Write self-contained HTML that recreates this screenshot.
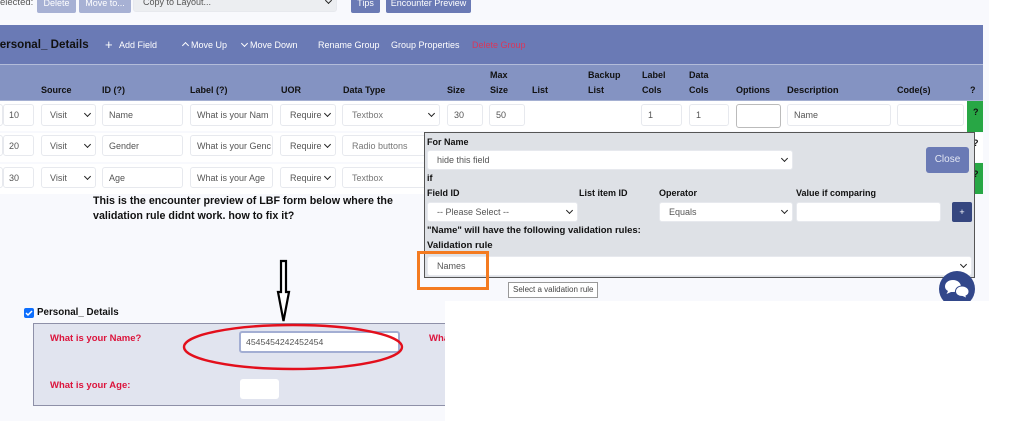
<!DOCTYPE html>
<html><head><meta charset="utf-8">
<style>
html,body{margin:0;padding:0;background:#fff;}
#p{position:relative;width:1024px;height:428px;overflow:hidden;background:#fff;font-family:"Liberation Sans",sans-serif;font-size:9px;color:#444;}
#p div{position:absolute;box-sizing:border-box;white-space:nowrap;}
.i{background:#fff;border:1px solid #e7e9ee;border-radius:3px;line-height:19px;padding-left:6px;color:#555;overflow:hidden;}
.s::after{content:"";position:absolute;right:5px;top:50%;width:4px;height:4px;margin-top:-4px;border-right:1.3px solid #222;border-bottom:1.3px solid #222;transform:rotate(45deg);}
.h{font-weight:bold;color:#111;line-height:14px;}
.w{color:#fff;line-height:12px;}
.b{color:#fff;border-radius:2px;text-align:center;}
.d{font-weight:bold;color:#111;line-height:12px;}
.r{background:#fff;}
</style></head><body><div id="p">
<div style="left:0;top:0;width:989px;height:421px;background:#f8f9fd"></div>

<div style="left:0;top:-3px;line-height:12px;color:#555;font-size:9.5px">elected:</div>
<div class="b" style="left:37px;top:-6px;width:39px;height:19px;background:#a7b1d4;line-height:19px">Delete</div>
<div class="b" style="left:79px;top:-6px;width:52px;height:19px;background:#a7b1d4;line-height:19px">Move to...</div>
<div class="i s" style="left:133px;top:-8px;width:204px;height:20px;background:#eceef1;padding-left:9px">Copy to Layout...</div>
<div class="b" style="left:351px;top:-6px;width:29px;height:19px;background:#6a7ab5;line-height:19px">Tips</div>
<div class="b" style="left:386px;top:-6px;width:85px;height:19px;background:#6a7ab5;line-height:19px">Encounter Preview</div>

<div style="left:0;top:25px;width:983px;height:39px;background:#6a7ab5"></div>
<div style="left:0;top:64px;width:983px;height:1px;background:#b3bcd9"></div>
<div style="left:0;top:65px;width:983px;height:35px;background:#8493c2"></div>
<div style="left:0;top:100px;width:983px;height:1px;background:#a5b0d2"></div>
<div class="r" style="left:0;top:101px;width:983px;height:30px"></div>
<div class="r" style="left:0;top:133px;width:983px;height:29px"></div>
<div class="r" style="left:0;top:164px;width:983px;height:30px"></div>

<div style="left:-8px;top:37px;font-weight:bold;font-size:11.6px;line-height:15px;color:#111">Personal_ Details</div>
<div class="w" style="left:105px;top:39px;font-size:13px">+</div>
<div class="w" style="left:119px;top:39px">Add Field</div>
<div style="left:183px;top:43px;width:5px;height:5px;border-left:1.2px solid #fff;border-top:1.2px solid #fff;transform:rotate(45deg)"></div>
<div class="w" style="left:191px;top:39px">Move Up</div>
<div style="left:242px;top:41px;width:5px;height:5px;border-right:1.2px solid #fff;border-bottom:1.2px solid #fff;transform:rotate(45deg)"></div>
<div class="w" style="left:250px;top:39px">Move Down</div>
<div class="w" style="left:318px;top:39px">Rename Group</div>
<div class="w" style="left:391px;top:39px">Group Properties</div>
<div class="w" style="left:472px;top:39px;color:#d8375c">Delete Group</div>

<div class="h" style="left:41px;top:83px">Source</div>
<div class="h" style="left:102px;top:83px">ID (?)</div>
<div class="h" style="left:190px;top:83px">Label (?)</div>
<div class="h" style="left:281px;top:83px">UOR</div>
<div class="h" style="left:343px;top:83px">Data Type</div>
<div class="h" style="left:447px;top:83px">Size</div>
<div class="h" style="left:490px;top:68px">Max</div>
<div class="h" style="left:490px;top:83px">Size</div>
<div class="h" style="left:532px;top:83px">List</div>
<div class="h" style="left:588px;top:68px">Backup</div>
<div class="h" style="left:588px;top:83px">List</div>
<div class="h" style="left:642px;top:68px">Label</div>
<div class="h" style="left:642px;top:83px">Cols</div>
<div class="h" style="left:689px;top:68px">Data</div>
<div class="h" style="left:689px;top:83px">Cols</div>
<div class="h" style="left:736px;top:83px">Options</div>
<div class="h" style="left:787px;top:83px;font-size:9.4px">Description</div>
<div class="h" style="left:897px;top:83px">Code(s)</div>
<div class="h" style="left:970px;top:83px">?</div>

<div class="i" style="left:-10px;top:104px;width:13px;height:22px"></div>
<div class="i" style="left:3px;top:104px;width:31px;height:22px;line-height:20px;padding-left:5px">10</div>
<div class="i s" style="left:41px;top:104px;width:55px;height:22px;line-height:20px;padding-left:8px">Visit</div>
<div class="i" style="left:102px;top:104px;width:81px;height:22px;line-height:20px">Name</div>
<div class="i" style="left:190px;top:104px;width:83px;height:22px;line-height:20px">What is your Nam</div>
<div class="i s" style="left:280px;top:104px;width:56px;height:22px;line-height:20px;padding:0 12px 0 9px">Require</div>
<div class="i s" style="left:342px;top:104px;width:98px;height:22px;line-height:20px;padding-left:9px;color:#777">Textbox</div>
<div class="i" style="left:447px;top:104px;width:36px;height:22px;line-height:20px">30</div>
<div class="i" style="left:489px;top:104px;width:36px;height:22px;line-height:20px">50</div>
<div class="i" style="left:641px;top:104px;width:41px;height:22px;line-height:20px">1</div>
<div class="i" style="left:689px;top:104px;width:40px;height:22px;line-height:20px">1</div>
<div class="i" style="left:736px;top:104px;width:45px;height:24px;border:1px solid #bbb"></div>
<div class="i" style="left:787px;top:104px;width:104px;height:22px;line-height:20px">Name</div>
<div class="i" style="left:897px;top:104px;width:67px;height:22px"></div>
<div style="left:967px;top:101px;width:16px;height:31px;background:#28a745"></div>
<div class="h" style="left:973px;top:105px;font-size:9px">?</div>

<div class="i" style="left:-10px;top:135px;width:13px;height:21px"></div>
<div class="i" style="left:3px;top:135px;width:31px;height:21px;line-height:21px;padding-left:5px">20</div>
<div class="i s" style="left:41px;top:135px;width:55px;height:21px;line-height:21px;padding-left:8px">Visit</div>
<div class="i" style="left:102px;top:135px;width:81px;height:21px;line-height:21px">Gender</div>
<div class="i" style="left:190px;top:135px;width:83px;height:21px;line-height:21px">What is your Genc</div>
<div class="i s" style="left:280px;top:135px;width:56px;height:21px;line-height:21px;padding:0 12px 0 9px">Require</div>
<div class="i" style="left:342px;top:135px;width:90px;height:21px;line-height:21px;padding-left:9px;color:#777">Radio buttons</div>
<div class="h" style="left:973px;top:136px;font-size:9px">?</div>

<div class="i" style="left:-10px;top:167px;width:13px;height:21px"></div>
<div class="i" style="left:3px;top:167px;width:31px;height:21px;line-height:20px;padding-left:5px">30</div>
<div class="i s" style="left:41px;top:167px;width:55px;height:21px;line-height:20px;padding-left:8px">Visit</div>
<div class="i" style="left:102px;top:167px;width:81px;height:21px;line-height:20px">Age</div>
<div class="i" style="left:190px;top:167px;width:83px;height:21px;line-height:20px">What is your Age</div>
<div class="i s" style="left:280px;top:167px;width:56px;height:21px;line-height:20px;padding:0 12px 0 9px">Require</div>
<div class="i" style="left:342px;top:167px;width:90px;height:21px;line-height:20px;padding-left:9px;color:#777">Textbox</div>
<div style="left:967px;top:163px;width:16px;height:31px;background:#28a745"></div>
<div class="h" style="left:973px;top:167px;font-size:9px">?</div>

<div style="left:93px;top:194px;font-weight:bold;font-size:10.7px;line-height:15px;color:#111;white-space:pre">This is the encounter preview of LBF form below where the
validation rule didnt work. how to fix it?</div>

<div style="left:424px;top:132px;width:551px;height:146px;background:#dee1e6;border:1px solid #555;border-bottom-width:1px"></div>
<div class="d" style="left:427px;top:136px">For Name</div>
<div class="i s" style="left:427px;top:150px;width:366px;height:20px;padding-left:9px">hide this field</div>
<div class="b" style="left:926px;top:147px;width:43px;height:26px;background:#6a7ab5;line-height:26px;font-size:10px;border-radius:3px;color:#e4e8f4">Close</div>
<div class="d" style="left:427px;top:172px">if</div>
<div class="d" style="left:427px;top:187px">Field ID</div>
<div class="d" style="left:579px;top:187px">List item ID</div>
<div class="d" style="left:659px;top:187px">Operator</div>
<div class="d" style="left:796px;top:187px">Value if comparing</div>
<div class="i s" style="left:427px;top:202px;width:151px;height:20px;padding-left:9px">-- Please Select --</div>
<div class="i s" style="left:659px;top:202px;width:134px;height:20px;padding-left:9px">Equals</div>
<div class="i" style="left:796px;top:202px;width:145px;height:20px"></div>
<div class="b" style="left:952px;top:202px;width:20px;height:20px;background:#35467f;line-height:20px">+</div>
<div class="d" style="left:427px;top:225px;font-size:9.5px">"Name" will have the following validation rules:</div>
<div class="d" style="left:427px;top:240px;font-size:9.6px">Validation rule</div>
<div class="i s" style="left:427px;top:256px;width:545px;height:20px;padding-left:9px">Names</div>
<div style="left:417px;top:251px;width:72px;height:39px;border:3px solid #f47b20"></div>
<div style="left:508px;top:282px;width:90px;height:16px;background:#fff;border:1px solid #999;line-height:14px;padding-left:4px;font-size:8px;color:#444">Select a validation rule</div>

<div style="left:939px;top:271px;width:37px;height:30px;overflow:hidden">
<svg width="37" height="30" viewBox="0 0 37 30" style="display:block"><circle cx="18" cy="18" r="18" fill="#32478a"/>
<path d="M14 9c-5 0-8 3-8 6.500 0 2 1 3.500 3 4.500l-1.500 3 4.500-2h2c5 0 8-2.500 8-5.500s-3-6.500-8-6.500z" fill="#fff"/>
<path d="M23 15c4 0 7 2.500 7 5.500 0 2-1 3.500-3 4.500l1 2.500-4.500-2c-4 0-7-2-7-5s2.500-5.500 6.500-5.500z" fill="#fff" stroke="#32478a" stroke-width="1"/></svg></div>

<div style="left:445px;top:301px;width:579px;height:127px;background:#fff"></div>

<div style="left:24px;top:308px;width:10px;height:10px;background:#0d6efd;border-radius:2px"></div>
<svg style="position:absolute;left:24px;top:308px" width="10" height="10" viewBox="0 0 10 10"><path d="M2 5l2 2 4-4" fill="none" stroke="#fff" stroke-width="1.5"/></svg>
<div style="left:37px;top:307px;font-weight:bold;font-size:9.8px;line-height:12px;color:#111">Personal_ Details</div>

<div style="left:33px;top:323px;width:412px;height:83px;background:#e1e4ef;border:1px solid #8e90a8;border-right:0"></div>
<div style="left:50px;top:333px;font-weight:bold;font-size:9.5px;line-height:12px;color:#dc143c">What is your Name?</div>
<div style="left:429px;top:333px;width:16px;overflow:hidden;font-weight:bold;font-size:9.5px;line-height:12px;color:#dc143c">What</div>
<div style="left:50px;top:380px;font-weight:bold;font-size:9.5px;line-height:12px;color:#dc143c">What is your Age:</div>
<div class="i" style="left:239px;top:331px;width:161px;height:22px;border:2px solid #a3aed3;line-height:18px;padding-left:5px;color:#555;font-size:8.7px">4545454242452454</div>
<div class="i" style="left:240px;top:379px;width:39px;height:20px;border:0"></div>

<svg style="position:absolute;left:0;top:0" width="1024" height="428" viewBox="0 0 1024 428">
<ellipse cx="293" cy="347" rx="109" ry="22" fill="none" stroke="#e30f1c" stroke-width="2.4"/>
<path d="M281 261h5v31h3l-5.500 29-5.500-29h3z" fill="#fff" stroke="#000" stroke-width="2.200"/>
</svg>
</div></body></html>
